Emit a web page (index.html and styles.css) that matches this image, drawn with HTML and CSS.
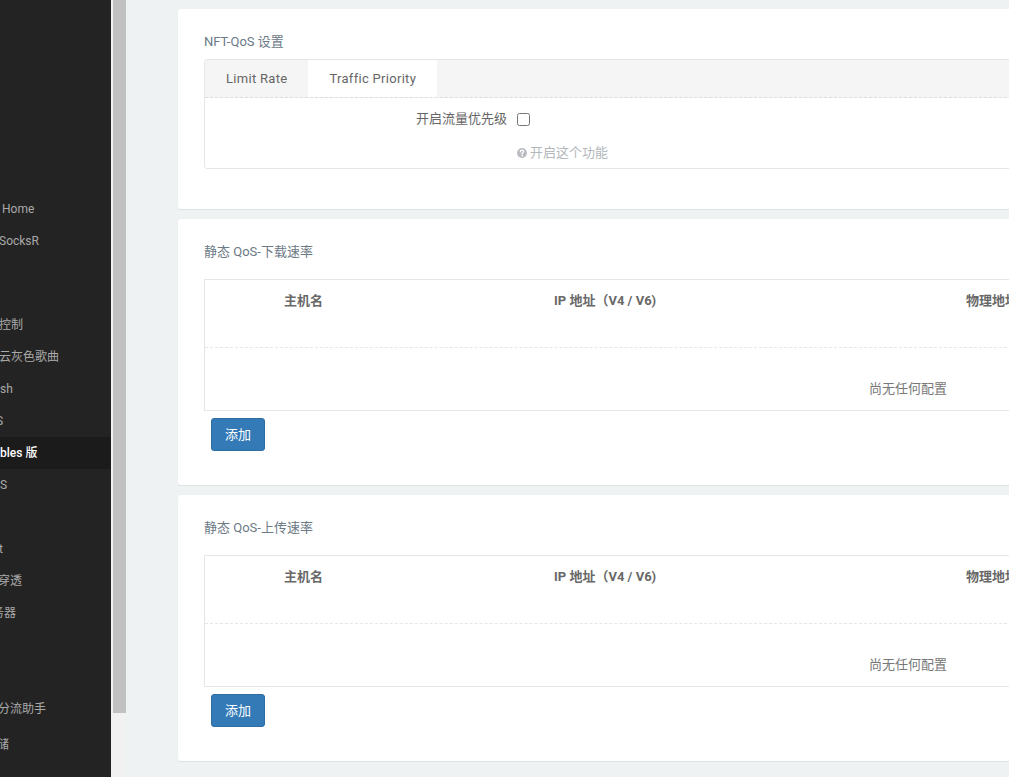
FILE: index.html
```html
<!DOCTYPE html>
<html lang="zh-CN">
<head>
<meta charset="utf-8">
<title>NFT-QoS</title>
<link rel="stylesheet" href="styles.css">
</head>
<body>
<div class="page">
  <aside class="sidebar">
    <ul class="menu">
      <li class="item gap-top home">Home</li>
      <li class="item cut-1">SocksR</li>
      <li class="item gap-52 cut-1">控制</li>
      <li class="item cut-1">云灰色歌曲</li>
      <li class="item">sh</li>
      <li class="item cut-4">S</li>
      <li class="item active">bles 版</li>
      <li class="item">S</li>
      <li class="item gap-32 cut-1">t</li>
      <li class="item cut-2">穿透</li>
      <li class="item cut-8">务器</li>
      <li class="item gap-64 cut-2">分流助手</li>
      <li class="item gap-4 cut-3">储</li>
    </ul>
  </aside>
  <div class="scrollbar"><div class="thumb"></div></div>
  <main class="main">
    <section class="card card-first">
      <h3 class="card-title">NFT-QoS 设置</h3>
      <div class="tabbox">
        <div class="tabs">
          <span class="tab">Limit Rate</span>
          <span class="tab active">Traffic Priority</span>
        </div>
        <div class="tab-body">
          <div class="field">
            <label class="field-label" for="enable">开启流量优先级</label>
            <div class="field-value"><input id="enable" type="checkbox"></div>
          </div>
          <div class="field help-row">
            <div class="field-label"></div>
            <div class="help">
              <svg class="help-icon" width="10" height="10" viewBox="0 0 10 10" aria-hidden="true">
                <circle cx="5" cy="5" r="5" fill="#b9bdc1"/>
                <path d="M3.4 3.7 C3.4 2.7 4.1 2.2 5 2.2 C5.9 2.2 6.6 2.8 6.6 3.6 C6.6 4.5 5.5 4.7 5.2 5.3 L5.2 5.9" fill="none" stroke="#fff" stroke-width="1.3" stroke-linecap="round"/>
                <circle cx="5.2" cy="7.6" r="0.8" fill="#fff"/>
              </svg>
              <span>开启这个功能</span>
            </div>
          </div>
        </div>
      </div>
    </section>

    <section class="card">
      <h3 class="card-title">静态 QoS-下载速率</h3>
      <div class="table">
        <div class="thead">
          <div class="th">主机名</div>
          <div class="th">IP 地址（V4 / V6)</div>
          <div class="th">物理地址</div>
        </div>
        <div class="empty">尚无任何配置</div>
      </div>
      <button class="btn" type="button">添加</button>
    </section>

    <section class="card">
      <h3 class="card-title">静态 QoS-上传速率</h3>
      <div class="table">
        <div class="thead">
          <div class="th">主机名</div>
          <div class="th">IP 地址（V4 / V6)</div>
          <div class="th">物理地址</div>
        </div>
        <div class="empty">尚无任何配置</div>
      </div>
      <button class="btn" type="button">添加</button>
    </section>
  </main>
</div>
</body>
</html>
```

FILE: styles.css
```css
* { box-sizing: border-box; }

html, body {
  margin: 0;
  padding: 0;
  height: 777px;
  overflow: hidden;
  background: #eef2f3;
  font-family: "Roboto", "Noto Sans CJK SC", sans-serif;
  font-size: 13px;
  color: #666;
}

.page {
  display: flex;
  height: 777px;
}

/* sidebar */
.sidebar {
  width: 111px;
  flex: 0 0 111px;
  background: #232323;
  overflow: hidden;
}

.menu {
  list-style: none;
  margin: 0;
  padding: 0;
}

.item {
  height: 32px;
  line-height: 32px;
  font-size: 12px;
  color: #a9a9a9;
  white-space: nowrap;
}

.item.active {
  background: #1b1b1b;
  color: #fff;
  font-weight: 500;
}

.home { padding-left: 2px; }
.cut-1 { margin-left: -1px; }
.cut-2 { margin-left: -2px; }
.cut-3 { margin-left: -3px; }
.cut-4 { margin-left: -4px; }
.cut-8 { margin-left: -8px; }

.gap-top { margin-top: 193px; }
.gap-52 { margin-top: 52px; }
.gap-32 { margin-top: 32px; }
.gap-64 { margin-top: 64px; }
.gap-4 { margin-top: 4px; }

/* fake scrollbar */
.scrollbar {
  width: 15px;
  flex: 0 0 15px;
  background: #f1f1f1;
  padding-left: 2px;
}

.thumb {
  height: 713px;
  background: #c1c1c1;
}

/* main */
.main {
  flex: 0 0 auto;
  width: 1520px;
  padding: 9px 0 0 52px;
  display: flex;
  flex-direction: column;
  gap: 10px;
}

.card {
  width: 1460px;
  background: #fff;
  border-radius: 3px;
  box-shadow: 0 1px 1px rgba(0, 0, 0, 0.07);
  padding: 23px 26px 34px;
}

.card-first {
  padding-bottom: 40px;
}

.card-title {
  margin: 0;
  font-size: 13px;
  font-weight: normal;
  line-height: 20px;
  color: #6c7a86;
}

/* tabs */
.tabbox {
  margin-top: 7px;
  border: 1px solid #e4e7e9;
  border-radius: 3px;
}

.tabs {
  display: flex;
  background: #f5f5f5;
  height: 37px;
  border-bottom: 1px dashed #dcdcdc;
  box-sizing: content-box;
}

.tab {
  padding: 0 21px;
  line-height: 37px;
  letter-spacing: 0.3px;
  color: #666;
}

.tab.active {
  background: #fff;
}

.tab-body {
  padding: 11px 0 5px;
}

.field {
  display: flex;
  align-items: center;
  line-height: 20px;
}

.field-label {
  width: 312px;
  padding-right: 10px;
  text-align: right;
  color: #666;
}

.field-value {
  display: flex;
  align-items: center;
}

.field-value input {
  margin: 0;
  width: 13px;
  height: 13px;
}

.help-row {
  margin-top: 14px;
}

.help {
  display: flex;
  align-items: center;
  gap: 3px;
  color: #b3b8bc;
}

.help-icon {
  display: block;
}

/* table */
.table {
  margin-top: 17px;
  width: 1408px;
  border: 1px solid #e6e6e6;
}

.thead {
  display: grid;
  grid-template-columns: 270px 412px 1fr;
  padding: 11px 0 36px;
  border-bottom: 1px dashed #e6e6e6;
}

.th {
  padding-left: 79px;
  font-weight: bold;
  line-height: 20px;
  color: #686868;
}

.empty {
  text-align: center;
  line-height: 20px;
  padding: 31px 0 11px;
  color: #777;
}

.btn {
  display: block;
  margin: 7px 0 0 7px;
  height: 33px;
  padding: 0 13px;
  border: 1px solid #2e6da4;
  border-radius: 3px;
  background: #337ab7;
  color: #fff;
  font-family: inherit;
  font-size: 13px;
  line-height: 31px;
  cursor: pointer;
}
```
